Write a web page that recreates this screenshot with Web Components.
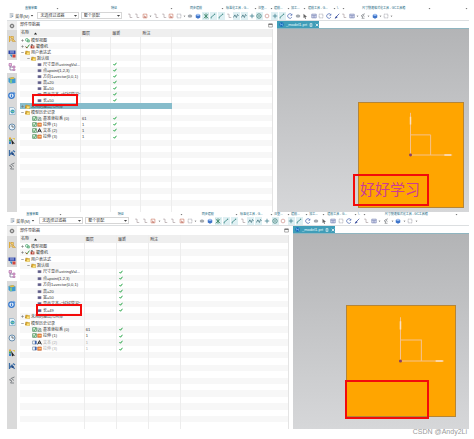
<!DOCTYPE html>
<html>
<head>
<meta charset="utf-8">
<title>部件导航器</title>
<style>
html,body{margin:0;background:#fff}
body{font-family:"Liberation Sans","Noto Sans CJK SC",sans-serif;font-size:4px;color:#444}
</style>
</head>
<body>
<cad-page>
  <cad-window value="50" zoom="100%" split="260fr 192fr" style="--ribbon:11px;--tools:10px;--title:8px;--mark:12px">
    <cad-canvas style="--px:81px;--py:73px;--pw:106px;--ph:106px;--mx:76px;--my:145px;--mw:76px;--mh:32px">好好学习</cad-canvas>
  </cad-window>
  <cad-window value="49" zoom="106.4%" split="276fr 176fr" suppressed style="--ribbon:4px;--tools:10px;--title:9px;--mark:16px">
    <cad-canvas style="--px:53px;--py:71px;--pw:110px;--ph:112px;--mx:52px;--my:146px;--mw:84px;--mh:39px"></cad-canvas>
  </cad-window>
  <span slot="credit">CSDN @Andy2Li</span>
</cad-page>
<script>
const shapes = {
  blank:'',
  gear:'<circle cx="8" cy="8" r="4" fill="none" stroke="#666" stroke-width="2.5"/><path d="M8 1v3M8 12v3M1 8h3M12 8h3M3 3l2 2M11 11l2 2M13 3l-2 2M5 11l-2 2" stroke="#666" stroke-width="1.5"/>',
  views:'<circle cx="6" cy="6" r="4.5" fill="none" stroke="#2c9a57" stroke-width="2"/><path d="M7 6h7v7H8z" fill="#9fd6b4" stroke="#2c8a50" stroke-width="1.5"/>',
  camera:'<rect x="2" y="5" width="12" height="9" fill="#b3352a"/><circle cx="9" cy="9" r="3" fill="#e9c7b8"/><path d="M3 1h6v4H3z" fill="#555"/>',
  redcheck:'<path d="M2 8l4 5 8-11" fill="none" stroke="#3d8f3c" stroke-width="3"/><path d="M3 9l3 4" stroke="#a6402c" stroke-width="3"/>',
  folder:'<path d="M2 3h6l2 2h5v9H2z" fill="#dca92e" stroke="#a98324"/><path d="M5 8h11l-3 6H2z" fill="#fbe37c"/><path d="M1 8h4v5H1z" fill="#b37c18"/>',
  expr:'<path d="M2 4h12v9H2z" fill="#8c86a6"/><path d="M4 7h8M4 10h8" stroke="#363b70" stroke-width="2"/>',
  check:'<path d="M2 8l4 5 8-10" fill="none" stroke="#27a646" stroke-width="4"/>',
  box:'<path d="M2 2h12v12H2z" fill="#e8f5e8" stroke="#347b45" stroke-width="2"/><path d="M4 8l3 4 6-9" fill="none" stroke="#238d3c" stroke-width="2.5"/>',
  off:'<path d="M2 3h12v10H2z" fill="#fff" stroke="#68809d" stroke-width="2"/><path d="M9 3h5v10H9z" fill="#3d64b0"/>',
  datum:'<path d="M3 2v12h12M3 14L12 4" fill="none" stroke="#517b64" stroke-width="2"/><path d="M7 3l6 3v6l-6-3z" fill="#afc9bf" stroke="#576b86"/>',
  extrude:'<path d="M2 3h12v11H2z" fill="#f28a3c" stroke="#b5522b" stroke-width="1.5"/><path d="M5 6h9v4H5z" fill="#f9c17f"/>',
  text:'<path d="M2 14L8 2l6 12M4 10h8" fill="none" stroke="#222" stroke-width="3"/>',
  tree1:'<path d="M3 2v12M3 4h6M3 10h9" fill="none" stroke="#ddab3c" stroke-width="2"/><path d="M6 3h5v4H6zM10 8l5 5H9z" fill="#f7d469" stroke="#c08a30"/>',
  tree2:'<path d="M1 1h14v7H1z" fill="#2e46a8"/><path d="M6 1v6M10 1v6" stroke="#e7ecff" stroke-width="1.5"/><path d="M3 9l5 6 1-6z" fill="#338ac4"/><path d="M9 9h6v6H9z" fill="#d2473e"/>',
  tree3:'<path d="M4 3v11h6M4 8h6" fill="none" stroke="#796a91" stroke-width="1.5"/><path d="M2 1h5v5H2zM10 6h4v4h-4zM10 12h4v3h-4z" fill="#f0c0df" stroke="#9b4f96"/>',
  books:'<path d="M1 4l9-2 5 3v9l-10 1-4-3z" fill="#3f9bd0"/><path d="M2 4l8-2 4 3-8 2z" fill="#e4bc46"/><path d="M6 8v6" stroke="#93d277" stroke-width="3"/>',
  info:'<circle cx="7" cy="9" r="5.5" fill="#e3effb" stroke="#3879cc" stroke-width="2.500"/><path d="M7 8v4M7 5v2" stroke="#3879cc" stroke-width="2.500"/><path d="M10 1l5 3-2 4z" fill="#5b98de"/>',
  doc:'<path d="M3 1h8l3 3v11H3z" fill="#eaf6fb" stroke="#6692b5"/><circle cx="9" cy="9" r="4" fill="#3c9ac1"/><path d="M6 9c2-3 3 3 6 0" fill="none" stroke="#90d38f" stroke-width="2"/>',
  clock:'<circle cx="8" cy="8" r="6" fill="#e8f3fb" stroke="#6b8fae" stroke-width="2"/><path d="M8 4v4h4" fill="none" stroke="#555" stroke-width="1.5"/>',
  palette:'<path d="M2 1h4v4H2z" fill="#e9a22e"/><path d="M2 5h4v4H2z" fill="#47ad60"/><path d="M2 9h4v5H2z" fill="#3a84d0"/><path d="M6 3l4 6 4 5-3-1-3 2z" fill="#222"/><path d="M8 2h6v4z" fill="#e6c950"/>',
  axes:'<path d="M3 2v12M3 12L8 6l5 8M10 3l4 3" fill="none" stroke="#3d6ea5" stroke-width="2.5"/><path d="M7 8h4v4H7z" fill="#294b83"/>',
  tool:'<path d="M13 2L6 5l-3 3 5 2-3 4h7M7 5l5 4" fill="none" stroke="#82868a" stroke-width="2"/>',
  menu:'<path d="M2 2h12M2 6h12M2 10h12M2 14h8" stroke="#768390" stroke-width="1.5"/><path d="M9 6l5 5-5 2z" fill="#7195b5"/>',
  line:'<path d="M2 12L13 3M2 13h3M11 3h3" stroke="#2c7e79" stroke-width="2"/>',
  curve:'<path d="M3 3h5v9h6" fill="none" stroke="#9c8c91" stroke-width="1.5"/>',
  wave:'<path d="M1 12L5 5l4 7 3-8 3 3" fill="none" stroke="#3e6f7a" stroke-width="2"/>',
  snap:'<path d="M3 3h10v10H3z" fill="none" stroke="#c46a54" stroke-width="1.5"/><path d="M6 6l5 5-4 2z" fill="#b55444"/>',
  frame:'<path d="M3 3h10v10H3z" fill="none" stroke="#8e8e9a" stroke-width="1.5" stroke-dasharray="3 1"/>',
  ball:'<ellipse cx="8" cy="8" rx="6" ry="4" fill="#889098"/><path d="M3 8h10" stroke="#eee" stroke-width="1.5"/>',
  cube:'<path d="M2 5l6-3 6 3v7l-6 3-6-3z" fill="#3e74c9"/><path d="M2 5l6 3 6-3-6-3z" fill="#a7c7f5"/>',
  star:'<path d="M2 3l12 11M14 3L2 14M8 1v14" stroke="#287858" stroke-width="2"/>',
  plus:'<path d="M8 2v12M2 8h12" stroke="#387c8b" stroke-width="2"/>',
  target:'<circle cx="8" cy="8" r="6" fill="none" stroke="#357a73" stroke-width="2"/><circle cx="8" cy="8" r="2" fill="#357a73"/>',
  ring:'<circle cx="8" cy="8" r="5" fill="none" stroke="#c07770" stroke-width="1.5"/>',
  loop:'<path d="M13 5a6 6 0 1 0 0 6M13 2v4H9" fill="none" stroke="#526fb4" stroke-width="2"/>',
  grid:'<path d="M2 3h12v10H2zM2 6h12M6 6v7M10 6v7" fill="#eef" stroke="#6674a5" stroke-width="1.5"/>',
  brush:'<path d="M14 2L7 9M7 8l-4 6 6-3" fill="#3b4f9d" stroke="#3b4f9d" stroke-width="2"/>',
  arrow:'<path d="M4 2l9 8-4 1 2 4-3 0-1-4-3 2z" fill="#666"/>',
  dot:'<path d="M3 6h10l-5 6z" fill="#444"/>',
  up:'<path d="M3 11h10L8 5z" fill="#222"/>',
  restore:'<path d="M2 3h12v10H2z" fill="#fff" stroke="#555" stroke-width="1.5"/><path d="M2 4h12" stroke="#555" stroke-width="3"/>',
  plusbox:'<path d="M4 8h8M8 4v8" stroke="#777" stroke-width="2"/>',
  minusbox:'<path d="M4 8h8" stroke="#777" stroke-width="2"/>',
  close:'<path d="M3 3l10 10M13 3L3 13" stroke="#fff" stroke-width="3"/>',
  page:'<path d="M4 2h8v12H4zM6 6h4M6 10h4" fill="none" stroke="#fff" stroke-width="2"/>',
  part:'<circle cx="8" cy="8" r="7" fill="#1769bd"/><path d="M5 11V5l6 6V5" fill="none" stroke="#8acbf1" stroke-width="2"/>'
};
class CadIcon extends HTMLElement{
  connectedCallback(){
    this.attachShadow({mode:'open'}).innerHTML=`<style>:host{display:inline-block;width:5px;height:5px;flex:none;vertical-align:middle}svg{display:block;width:100%;height:100%}</style><svg viewBox="0 0 16 16" aria-hidden="true">${shapes[this.getAttribute('name')]}</svg>`;
  }
}
class CadRibbon extends HTMLElement{
  connectedCallback(){
    const items=[[18,''],[31,'直接草图'],[55,'·'],[59,'特征'],[20,'·'],[31,'同步建模'],[5,'·'],[28,'标准化工具 - G...'],[4,'·'],[12,'注塑...'],[4,'·'],[13,'建模...'],[4,'·'],[12,'加工...'],[5,'·'],[25,'建模工具 - G...'],[4,'·'],[5,'\\.'],[20,'·'],[66,'尺寸快速格式化工具 - GC工具箱'],[37,'·'],[4,'·']];
    this.attachShadow({mode:'open'}).innerHTML=`<style>
    :host{display:block;overflow:hidden;height:var(--ribbon)}
    div{display:grid;width:var(--zoom);height:100%;align-items:end;grid-template-columns:${items.map(i=>`minmax(0,${i[0]}fr)`).join(' ')}}
    span{font-size:3px;line-height:4px;white-space:nowrap;color:#0e6079;padding-bottom:1px}
    cad-icon{width:3px;height:3px;margin-bottom:1px}
    </style><div>${items.map(i=>i[1]==='·'?'<cad-icon name="dot"></cad-icon>':`<span>${i[1]}</span>`).join('')}</div>`;
  }
}
class CadToolbar extends HTMLElement{
  connectedCallback(){
    const a=['curve','curve','snap','dot','curve','curve','snap','frame','dot','ball','cube','star*','line*','line*','curve','wave*','wave*','plus','target*','ring','plus*','line*','loop','ball','arrow','','grid','frame','loop','brush','curve','grid','dot','tool','dot','cube','dot','frame','dot'];
    this.attachShadow({mode:'open'}).innerHTML=`<style>
    :host{display:block;overflow:hidden;height:var(--tools);box-sizing:border-box;border-bottom:1px solid #dcdfe1}
    .row{display:grid;grid-template-columns:29fr 42fr 42fr 274fr 75fr;column-gap:2px;width:var(--zoom);height:100%;align-items:center}
    button{all:unset;display:flex;align-items:center;justify-content:center}
    .menu{font-size:4px;white-space:nowrap;gap:1px;padding-left:1px}
    .menu cad-icon:last-child{width:4px}
    label{display:flex;align-items:center;border:1px solid #d6d6d6;height:7px;box-sizing:border-box;min-width:0}
    select{all:unset;font-size:4px;line-height:5px;flex:1;min-width:0;padding-left:2px;color:#333}
    .tools{display:flex;justify-content:space-between;padding-left:2px}
    .tools button{width:7px;height:8px}.tools .dot{width:3px}.on{background:#dff0f3}
    .tools cad-icon{width:6px;height:6px}.tools .dot cad-icon{width:3px}
    </style><div class="row"><button class="menu"><cad-icon name="menu"></cad-icon>菜单(M)<cad-icon name="dot"></cad-icon></button>
    <label><select aria-label="选择过滤器"><option>无选择过滤器</option></select><cad-icon name="dot"></cad-icon></label>
    <label><select aria-label="选择范围"><option>整个装配</option></select><cad-icon name="dot"></cad-icon></label>
    <div class="tools">${a.map(n=>{if(!n)return '<i></i>';const k=n.replace('*','');return `<button aria-label="${k}" class="${n.includes('*')?'on':''} ${k==='dot'?'dot':''}"><cad-icon name="${k}"></cad-icon></button>`}).join('')}</div></div>`;
  }
}
class CadSidebar extends HTMLElement{
  connectedCallback(){
    const a=['gear','tree1','tree2','tree3','books','info','doc','clock','palette','axes','tool'];
    this.attachShadow({mode:'open'}).innerHTML=`<style>
    :host{display:grid;background:#dadada;grid-template-rows:9fr 18fr 12fr 13fr 13fr 17fr 16fr 15fr 13fr 12fr 13fr 40fr}
    button{all:unset;display:flex;align-items:center;justify-content:center;min-height:0}
    button:nth-of-type(1){background:#eee}button:nth-of-type(4){background:#fff}
    cad-icon{width:8px;height:8px}button:first-of-type cad-icon{width:6px;height:6px}
    </style>${a.map(n=>`<button aria-label="${n}"><cad-icon name="${n}"></cad-icon></button>`).join('')}`;
  }
}
class CadTree extends HTMLElement{
  connectedCallback(){
    const off=this.hasAttribute('suppressed'), s=off?'off':'box';
    const rows=[
      [0,'plusbox','views','','模型视图'],[0,'plusbox','redcheck','camera','摄像机'],[0,'minusbox','folder','','用户表达式'],[6,'minusbox','folder','','默认组'],
      [12,'','expr','','尺寸显示=stringVal...','',1],[12,'','expr','','点=point(1,2,3)','',1],[12,'','expr','','方向1=vector(0,0,1)','',1],[12,'','expr','','高=20','',1],[12,'','expr','','宽=50','',1],[12,'','expr','','显示文本="好好学习"','',1],[12,'','expr','','长='+this.getAttribute('value'),'',1,'mark'],
      [0,'plusbox','folder','','未用的输出几何体','',0,off?'':'sel'],[0,'minusbox','folder','','模型历史记录'],
      [7,'','box','datum','基准坐标系 (0)','61',1],[7,'','box','extrude','拉伸 (1)','1',1],[7,'',s,'text','文本 (2)','1',1,off?'dim':''],[7,'',s,'extrude','拉伸 (3)','1',1,off?'dim':'strong']];
    while(rows.length<29)rows.push([0,'','','','']);
    const ic=n=>n?`<cad-icon name="${n}"></cad-icon>`:'';
    this.attachShadow({mode:'open'}).innerHTML=`<style>
    :host{display:flex;flex-direction:column;padding:0 4px 0 3px;min-width:0;font-size:4px;color:#333}
    header{height:var(--title);display:flex;align-items:center;justify-content:space-between;flex:none;line-height:6px}
    header button{all:unset;display:flex}
    .wrap{flex:1;min-height:0;border-right:1px solid #e4e4e4}
    table{width:100%;height:100%;border-collapse:collapse;table-layout:fixed}
    col.a{width:24%}col.b,col.c,col.d{width:12%}
    th,td{padding:0 0 0 1px;line-height:5px;font-weight:400;text-align:left;white-space:nowrap;border-right:1px solid #ededed}
    td:first-child{position:relative;padding:0}
    thead tr{height:8px;background:#efefef}tbody tr:nth-child(even){background:#f7f7f7}
    th:last-child,td:last-child{border-right:0}
    .n{display:flex;align-items:center;height:5px;padding-left:var(--d)}
    .n span{padding-left:1px}
    td cad-icon{display:block}td:nth-child(3) cad-icon{width:4px;height:4px;margin-left:1px}th:first-child cad-icon{margin-left:3px}
    .sel td:not(:last-child){background:#86bccb;border-color:#86bccb}.dim{color:#aaa}.strong{font-weight:700}
    .box{position:absolute;box-sizing:border-box;left:var(--mark);top:-3px;width:46px;height:12px;border:2px solid #f30b0b;z-index:1}
    </style><header><span>部件导航器</span><button aria-label="restore"><cad-icon name="restore"></cad-icon></button></header>
    <div class="wrap"><table><colgroup><col class="a"><col class="b"><col class="c"><col class="d"><col></colgroup>
    <thead><tr><th>名称 <cad-icon name="up"></cad-icon></th><th>图层</th><th>最新</th><th>附注</th><th></th></tr></thead><tbody>
    ${rows.map(r=>`<tr class="${r[7]||''}"><td><div class="n" style="--d:${r[0]}px">${r[1]?ic(r[1]):r[4]?ic('blank'):''}${ic(r[2])}${ic(r[3])}<span>${r[4]}</span></div>${r[7]==='mark'?'<i class="box"></i>':''}</td><td>${r[5]||''}</td><td>${r[6]?ic('check'):''}</td><td></td><td></td></tr>`).join('')}</tbody></table></div>`;
  }
}
class CadCanvas extends HTMLElement{
  connectedCallback(){
    this.attachShadow({mode:'open'}).innerHTML=`<style>
    :host{display:flex;flex-direction:column;min-width:0}
    nav{height:7px;flex:none}
    button{all:unset;box-sizing:border-box;width:42px;height:7px;background:#409db8;color:#e5fbff;font-size:4px;line-height:7px;display:flex;align-items:center;gap:2px;padding-left:2px}
    button cad-icon{width:4px;height:4px}button cad-icon:first-child{width:5px;height:5px}
    .view{position:relative;flex:1;background:linear-gradient(#b3b4b6,#d6d7d9);border-top:1px solid #8fb5c0;box-sizing:border-box;overflow:hidden}
    .plate{position:absolute;box-sizing:border-box;left:var(--px);top:var(--py);width:var(--pw);height:var(--ph);background:#ffa500;border:1px solid #b58537}
    svg{display:block;width:100%;height:100%}
    .mark{position:absolute;box-sizing:border-box;left:var(--mx);top:var(--my);width:var(--mw);height:var(--mh);border:2px solid #f30b0b;display:flex;align-items:center;padding-left:5px;font-size:15px;line-height:20px;color:#cc3d94;white-space:nowrap}
    </style><nav><button><cad-icon name="part"></cad-icon>_model1.prt<cad-icon name="page"></cad-icon><cad-icon name="close"></cad-icon></button></nav>
    <div class="view"><div class="plate"><svg viewBox="0 0 106 106"><path d="M52.5 53V10M52.5 53H95M52.5 32.5H73V53" fill="none" stroke="#f5c38e"/><path d="M52.5 14v8M87 53h7" stroke="#fae0c5" stroke-width="1.5"/><circle cx="52.5" cy="53" r="1.5" fill="#8c3f63"/></svg></div><div class="mark"><slot></slot></div></div>`;
  }
}
class CadWindow extends HTMLElement{
  connectedCallback(){
    this.attachShadow({mode:'open'}).innerHTML=`<style>
    :host{display:flex;flex-direction:column;min-height:0;--zoom:${this.getAttribute('zoom')};overflow:hidden}
    .body{flex:1;min-height:0;display:grid;grid-template-columns:10px minmax(0,1fr)}
    .work{display:grid;min-height:0;grid-template-columns:${this.getAttribute('split')}}
    ::slotted(cad-canvas){min-height:0}
    </style><cad-ribbon></cad-ribbon><cad-toolbar></cad-toolbar><div class="body"><cad-sidebar></cad-sidebar><div class="work"><cad-tree value="${this.getAttribute('value')}" ${this.hasAttribute('suppressed')?'suppressed':''}></cad-tree><slot></slot></div></div>`;
  }
}
class CadPage extends HTMLElement{
  connectedCallback(){
    this.attachShadow({mode:'open'}).innerHTML=`<style>
    :host{display:grid;box-sizing:border-box;min-height:100vh;grid-template-rows:212fr 217fr 10px;padding:0 5px 0 7px}
    footer{text-align:right;font-size:7px;line-height:6px;color:#999;padding-right:2px}
    </style><slot></slot><footer><slot name="credit"></slot></footer>`;
  }
}
customElements.define('cad-icon',CadIcon);
customElements.define('cad-ribbon',CadRibbon);
customElements.define('cad-toolbar',CadToolbar);
customElements.define('cad-sidebar',CadSidebar);
customElements.define('cad-tree',CadTree);
customElements.define('cad-canvas',CadCanvas);
customElements.define('cad-window',CadWindow);
customElements.define('cad-page',CadPage);
</script>
</body>
</html>
